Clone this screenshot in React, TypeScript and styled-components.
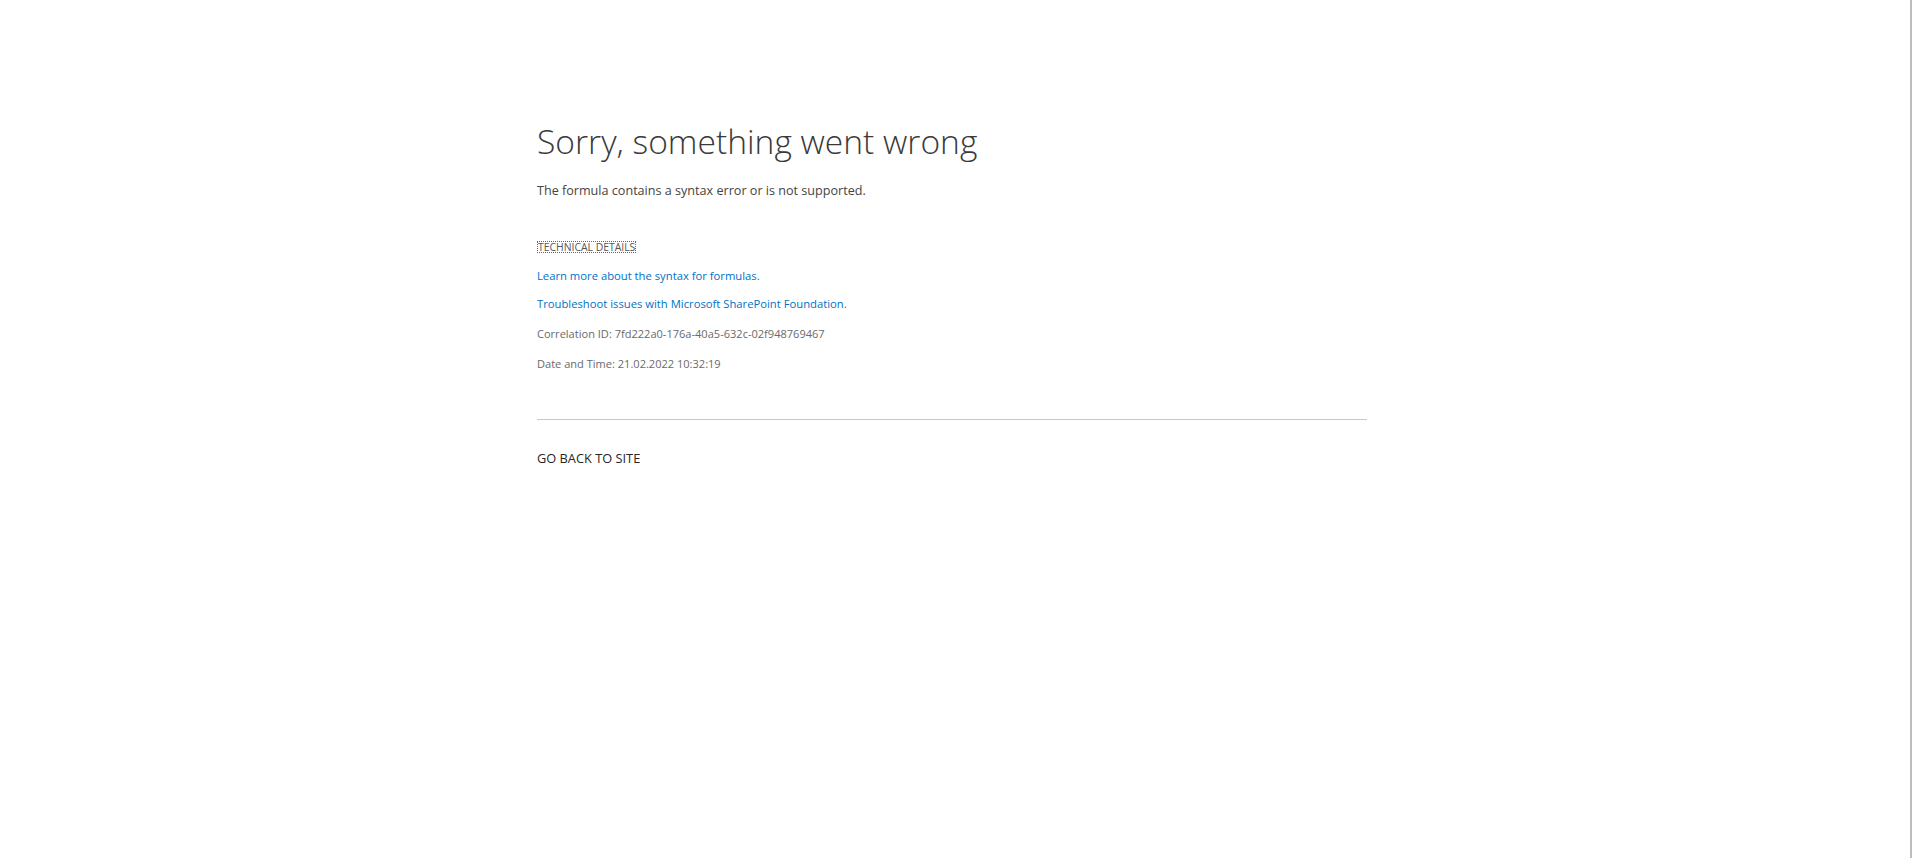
import React from "react";
import styled, { createGlobalStyle } from "styled-components";

const GlobalStyle = createGlobalStyle`
  html, body {
    margin: 0;
    padding: 0;
    background: #ffffff;
  }
  body {
    font-family: "Open Sans", "Noto Sans", "Liberation Sans", sans-serif;
    -webkit-font-smoothing: antialiased;
  }
`;

const Frame = styled.div`
  box-sizing: border-box;
  width: 1912px;
  height: 858px;
  border-right: 2px solid #bdbdbd;
  background: #ffffff;
  overflow: hidden;
`;

const Content = styled.main`
  display: flex;
  flex-direction: column;
  align-items: flex-start;
  padding: 120.5px 0 0 537px;
`;

const Title = styled.h1`
  margin: 0;
  font-size: 33.6px;
  line-height: 40px;
  font-weight: 300;
  color: #3a3a3a;
  letter-spacing: 0;
`;

const Message = styled.p`
  margin: 22.5px 0 0;
  font-size: 12.6px;
  line-height: 16px;
  color: #444444;
`;

const DetailsToggle = styled.a`
  display: block;
  margin-top: 42px;
  border: 1px dotted #666666;
  font-size: 10.4px;
  line-height: 10px;
  color: #555555;
  text-transform: uppercase;
  text-decoration: none;
  cursor: pointer;
`;

const InfoLine = styled.div<{ $gap: number; $link?: boolean }>`
  margin-top: ${(p) => p.$gap}px;
  font-size: ${(p) => (p.$link ? "11.25px" : "11.05px")};
  line-height: 15px;
  color: ${(p) => (p.$link ? "#0072c6" : "#6a6a6a")};
`;

const InfoLink = styled.a`
  color: inherit;
  text-decoration: none;
  cursor: pointer;
`;

const Divider = styled.hr`
  width: 830px;
  height: 1px;
  margin: 48px 0 0;
  border: none;
  background: #c8c8c8;
`;

const BackLink = styled.a`
  display: block;
  margin-top: 30px;
  font-size: 12.8px;
  line-height: 16px;
  color: #262626;
  text-transform: uppercase;
  text-decoration: none;
  cursor: pointer;
`;

export default function App() {
  return (
    <>
      <GlobalStyle />
      <Frame>
        <Content>
          <Title>Sorry, something went wrong</Title>
          <Message>The formula contains a syntax error or is not supported.</Message>
          <DetailsToggle>Technical Details</DetailsToggle>
          <InfoLine $gap={15} $link>
            <InfoLink>Learn more about the syntax for formulas.</InfoLink>
          </InfoLine>
          <InfoLine $gap={13} $link>
            <InfoLink>Troubleshoot issues with Microsoft SharePoint Foundation.</InfoLink>
          </InfoLine>
          <InfoLine $gap={15}>Correlation ID: 7fd222a0-176a-40a5-632c-02f948769467</InfoLine>
          <InfoLine $gap={15}>Date and Time: 21.02.2022 10:32:19</InfoLine>
          <Divider />
          <BackLink>Go back to site</BackLink>
        </Content>
      </Frame>
    </>
  );
}
